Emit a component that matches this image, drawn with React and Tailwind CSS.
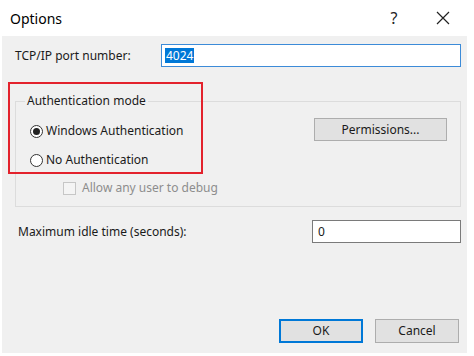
import React from "react";

function Radio({ checked }) {
  return (
    <span className="w-[13px] h-[13px] rounded-full border border-[#333] bg-white flex items-center justify-center shrink-0">
      {checked && <span className="w-[7px] h-[7px] rounded-full bg-[#222]" />}
    </span>
  );
}

export default function App() {
  return (
    <div className="w-[474px] h-[356px] bg-white relative overflow-hidden text-[12px] text-[#1a1a1a] font-['Noto_Sans',sans-serif]">
      {/* title bar */}
      <div className="h-[36px] flex items-center pl-[10px]">
        <span className="text-[14px] text-black">Options</span>
        <span className="ml-auto text-[16px] text-[#222] w-[20px] text-center">?</span>
        <svg className="ml-[32px] mr-[24px]" width="14" height="14" viewBox="0 0 14 14">
          <path d="M1 1 L13 13 M13 1 L1 13" stroke="#222" strokeWidth="1.2" fill="none" />
        </svg>
      </div>

      {/* client area */}
      <div className="h-[317px] ml-[2px] mr-[7px] bg-[#f0f0f0] flex flex-col pl-[13px] pr-[6px]">
        <div className="flex items-center mt-[8px] h-[23px]">
          <span className="w-[146px]">TCP/IP port number:</span>
          <div className="flex-1 h-[23px] border border-[#3c8bd8] bg-white flex items-center pl-[3px]">
            <span className="bg-[#0078d7] text-white leading-[15px] px-[1px]">4024</span>
          </div>
        </div>

        <fieldset className="mt-[25px] border border-[#dcdcdc] h-[115px] px-[14px] pt-[8px] relative">
          <legend className="px-[2px] ml-[-5px] text-[#1a1a1a]">Authentication mode</legend>
          <div className="flex items-start">
            <div className="flex flex-col gap-[11px] mt-[4px]">
              <label className="flex items-center gap-[3px]">
                <Radio checked />
                <span>Windows Authentication</span>
              </label>
              <label className="flex items-center gap-[3px]">
                <Radio />
                <span>No Authentication</span>
              </label>
            </div>
            <button className="ml-auto mr-[-1px] w-[133px] h-[23px] border border-[#adadad] bg-[#e1e1e1] text-[#1a1a1a]">
              Permissions...
            </button>
          </div>
          <label className="flex items-center gap-[6px] ml-[33px] mt-[10px] text-[#8d8d8d]">
            <span className="w-[13px] h-[13px] border border-[#c6c6c6] bg-[#f4f4f4]" />
            <span>Allow any user to debug</span>
          </label>
        </fieldset>

        <div className="flex items-center mt-[13px] h-[23px]">
          <span className="ml-[3px]">Maximum idle time (seconds):</span>
          <div className="ml-auto w-[149px] h-[23px] border border-[#7a7a7a] bg-white flex items-center pl-[5px]">
            0
          </div>
        </div>

        <div className="mt-auto mb-[10px] flex justify-end gap-[12px] pr-[2px]">
          <button className="w-[84px] h-[24px] border-2 border-[#0078d7] bg-[#e1e1e1]">OK</button>
          <button className="w-[84px] h-[24px] border border-[#adadad] bg-[#e1e1e1]">Cancel</button>
        </div>
      </div>

      {/* red annotation box */}
      <div className="absolute left-[8px] top-[82px] w-[195px] h-[92px] border-2 border-[#e3222c] pointer-events-none" />
    </div>
  );
}
